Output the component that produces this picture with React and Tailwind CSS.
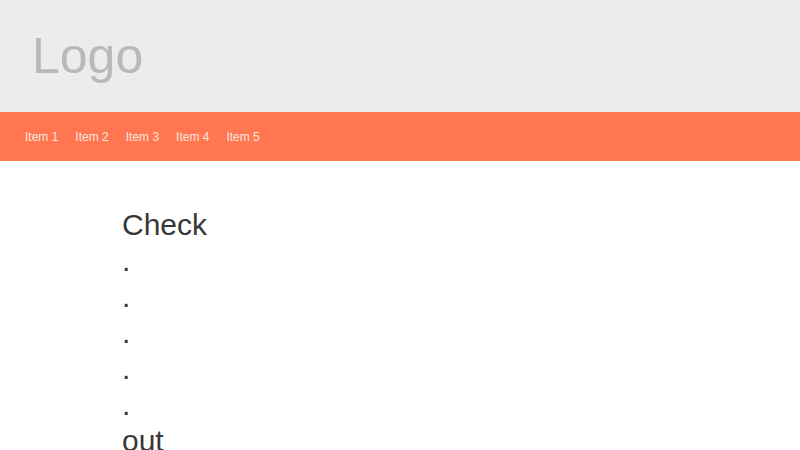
export default function App() {
    const items = ["Item 1", "Item 2", "Item 3", "Item 4", "Item 5"];
    const lines = ["Check", ".", ".", ".", ".", ".", "out"];

    return (
        <div className="min-h-screen bg-white font-['Liberation_Sans',Arial,sans-serif]">
            {/* Header */}
            <header className="h-[112px] bg-[#ececec] flex items-center pl-[32px]">
                <h1 className="text-[50px] leading-none text-[#b9b9b9]">Logo</h1>
            </header>

            {/* Nav */}
            <nav className="h-[49px] bg-[#ff7650] flex items-center pl-[25px] gap-[17px]">
                {items.map((item) => (
                    <a key={item} href="#" className="text-[12px] text-[#fde6de]">
                        {item}
                    </a>
                ))}
            </nav>

            {/* Content */}
            <main className="pl-[122px] pt-[46px] text-[30px] leading-[36px] text-[#383838]">
                {lines.map((line, i) => (
                    <p key={i}>{line}</p>
                ))}
            </main>
        </div>
    );
}
